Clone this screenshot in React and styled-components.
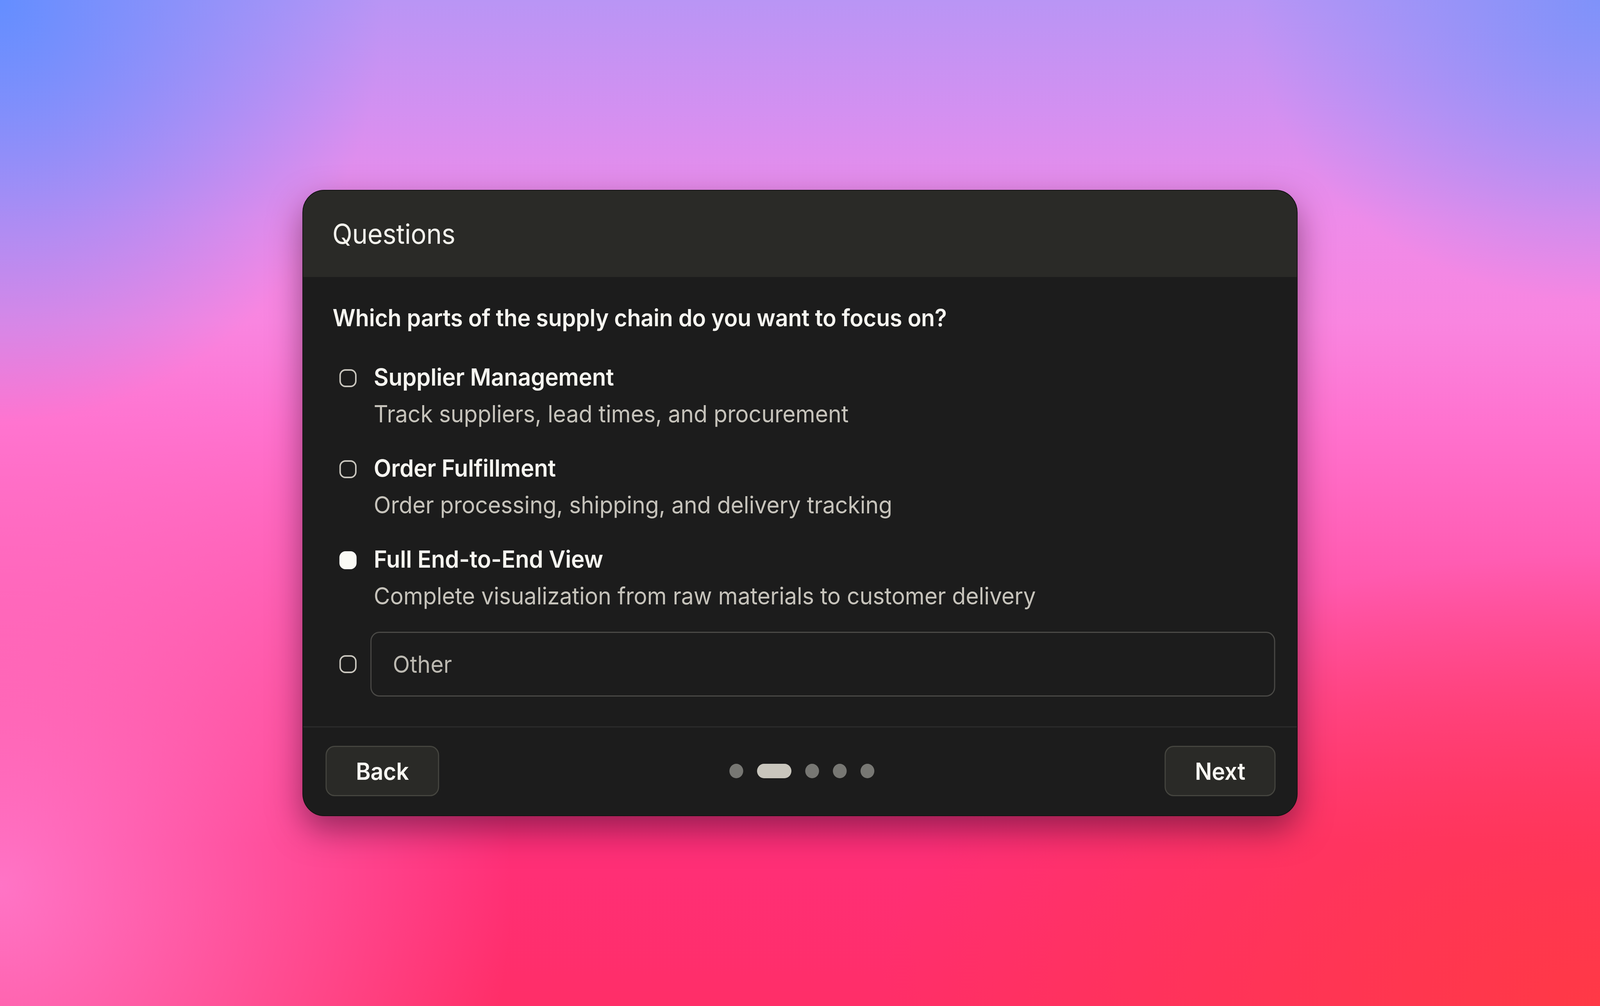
import React, { useState, useEffect } from 'react';
import styled, { createGlobalStyle } from 'styled-components';

const GlobalStyle = createGlobalStyle`
  html, body {
    margin: 0;
    padding: 0;
  }
  body {
    font-family: Inter, "Noto Sans", "Liberation Sans", sans-serif;
    -webkit-font-smoothing: antialiased;
  }
`;

// the card is laid out on a 4283px wide design; squeeze it to the real window width
const DESIGN_WIDTH = 4283;

const options = [
  {
    id: 'supplier',
    title: 'Supplier Management',
    description: 'Track suppliers, lead times, and procurement',
  },
  {
    id: 'fulfillment',
    title: 'Order Fulfillment',
    description: 'Order processing, shipping, and delivery tracking',
  },
  {
    id: 'full',
    title: 'Full End-to-End View',
    description: 'Complete visualization from raw materials to customer delivery',
  },
];

const steps = 5;

const useWidthScale = () => {
  const get = () => (typeof window !== 'undefined' ? window.innerWidth / DESIGN_WIDTH : 1);
  const [scale, setScale] = useState(get);

  useEffect(() => {
    const onResize = () => setScale(get());
    window.addEventListener('resize', onResize);
    return () => window.removeEventListener('resize', onResize);
  }, []);

  return scale;
};

const App = () => {
  const [selected, setSelected] = useState('full');
  const [other, setOther] = useState('');
  const current = 1;
  const scale = useWidthScale();

  return (
    <>
      <GlobalStyle />
      <Page>
        <Card style={{ transform: `scaleX(${scale})` }}>
          <Header>
            <HeaderTitle>Questions</HeaderTitle>
          </Header>

          <Body>
            <Question>Which parts of the supply chain do you want to focus on?</Question>

            <OptionList>
              {options.map((opt) => (
                <Option key={opt.id} onClick={() => setSelected(opt.id)}>
                  <Check $checked={selected === opt.id} />
                  <OptionText>
                    <OptionTitle>{opt.title}</OptionTitle>
                    <OptionDescription>{opt.description}</OptionDescription>
                  </OptionText>
                </Option>
              ))}

              <OtherRow>
                <Check
                  $checked={selected === 'other'}
                  $inline
                  onClick={() => setSelected('other')}
                />
                <OtherInput
                  placeholder="Other"
                  value={other}
                  onChange={(e) => setOther(e.target.value)}
                />
              </OtherRow>
            </OptionList>
          </Body>

          <Footer>
            <NavButton type="button">Back</NavButton>
            <Dots>
              {Array.from({ length: steps }).map((_, i) => (
                <Dot key={i} $active={i === current} />
              ))}
            </Dots>
            <NavButton type="button">Next</NavButton>
          </Footer>
        </Card>
      </Page>
    </>
  );
};

export default App;

const Page = styled.div`
  width: 100vw;
  height: 100vh;
  display: flex;
  align-items: center;
  justify-content: center;
  overflow: hidden;
  background:
    radial-gradient(ellipse 24% 42% at 0% 0%, rgba(100, 142, 255, 1), rgba(100, 142, 255, 0) 100%),
    radial-gradient(ellipse 22% 30% at 100% 0%, rgba(124, 146, 250, 0.95), rgba(124, 146, 250, 0) 100%),
    radial-gradient(ellipse 32% 55% at 0% 88%, rgba(255, 128, 212, 0.85), rgba(255, 128, 212, 0) 100%),
    radial-gradient(ellipse 45% 45% at 100% 100%, rgba(255, 58, 66, 0.9), rgba(255, 58, 66, 0) 100%),
    linear-gradient(
      180deg,
      #b995f5 0%,
      #d390f1 11%,
      #ee8be9 22%,
      #f985e0 32%,
      #ff72cf 42%,
      #ff5cb2 56%,
      #ff4592 70%,
      #ff2f78 84%,
      #ff2e68 100%
    );
`;

const Card = styled.div`
  flex-shrink: 0;
  width: 2664px;
  box-sizing: border-box;
  background: #1c1c1c;
  border: 2px solid #131313;
  border-radius: 58px;
  overflow: hidden;
  box-shadow: 0 35px 85px rgba(50, 8, 40, 0.5);
`;

const Header = styled.div`
  height: 221px;
  display: flex;
  align-items: center;
  padding: 0 78px;
  background: #2a2a27;
`;

const HeaderTitle = styled.h1`
  margin: 0;
  font-size: 70px;
  font-weight: 400;
  color: #f3f2ec;
  letter-spacing: -0.4px;
`;

const Body = styled.div`
  padding: 68px 58px 76px 79px;
`;

const Question = styled.h2`
  margin: 0 0 69px;
  font-size: 60px;
  line-height: 72px;
  font-weight: 600;
  color: #f6f5f0;
  letter-spacing: -0.3px;
`;

const OptionList = styled.div`
  display: flex;
  flex-direction: column;
  gap: 45px;
  padding-left: 18px;
`;

const Option = styled.div`
  display: grid;
  grid-template-columns: 46px 1fr;
  column-gap: 46px;
  align-items: start;
  cursor: pointer;
`;

const Check = styled.span`
  display: block;
  flex-shrink: 0;
  width: 46px;
  height: 46px;
  box-sizing: border-box;
  margin-top: ${({ $inline }) => ($inline ? '0' : '27px')};
  border-radius: 16px;
  border: 4px solid ${({ $checked }) => ($checked ? '#fafaf5' : '#c8c5bd')};
  background: ${({ $checked }) => ($checked ? '#fafaf5' : 'transparent')};
  cursor: pointer;
`;

const OptionText = styled.div`
  display: flex;
  flex-direction: column;
`;

const OptionTitle = styled.div`
  font-size: 61px;
  line-height: 94px;
  font-weight: 600;
  color: #f6f5f0;
  letter-spacing: -0.3px;
`;

const OptionDescription = styled.div`
  font-size: 60px;
  line-height: 94px;
  font-weight: 400;
  color: #c6c3bb;
  letter-spacing: -0.2px;
`;

const OtherRow = styled.div`
  display: flex;
  align-items: center;
  gap: 37px;
`;

const OtherInput = styled.input`
  flex: 1;
  min-width: 0;
  height: 166px;
  box-sizing: border-box;
  padding: 0 57px;
  background: transparent;
  border: 3px solid #4a4946;
  border-radius: 24px;
  font-family: Inter, "Noto Sans", "Liberation Sans", sans-serif;
  font-size: 60px;
  color: #f6f5f0;
  outline: none;

  &::placeholder {
    color: #bcb9b1;
  }
`;

const Footer = styled.div`
  display: flex;
  align-items: center;
  justify-content: space-between;
  padding: 47px 57px 49px 60px;
  border-top: 3px solid #2b2b2b;
`;

const NavButton = styled.button`
  height: 129px;
  padding: 0 78px;
  box-sizing: border-box;
  background: #2a2a27;
  border: 3px solid #45453f;
  border-radius: 24px;
  font-family: Inter, "Noto Sans", "Liberation Sans", sans-serif;
  font-size: 60px;
  font-weight: 600;
  color: #f8f7f2;
  letter-spacing: -0.3px;
  cursor: pointer;
`;

const Dots = styled.div`
  display: flex;
  align-items: center;
  gap: 37px;
`;

const Dot = styled.span`
  display: block;
  width: ${({ $active }) => ($active ? '92px' : '37px')};
  height: 37px;
  border-radius: 19px;
  background: ${({ $active }) => ($active ? '#c9c6bd' : '#777773')};
`;
